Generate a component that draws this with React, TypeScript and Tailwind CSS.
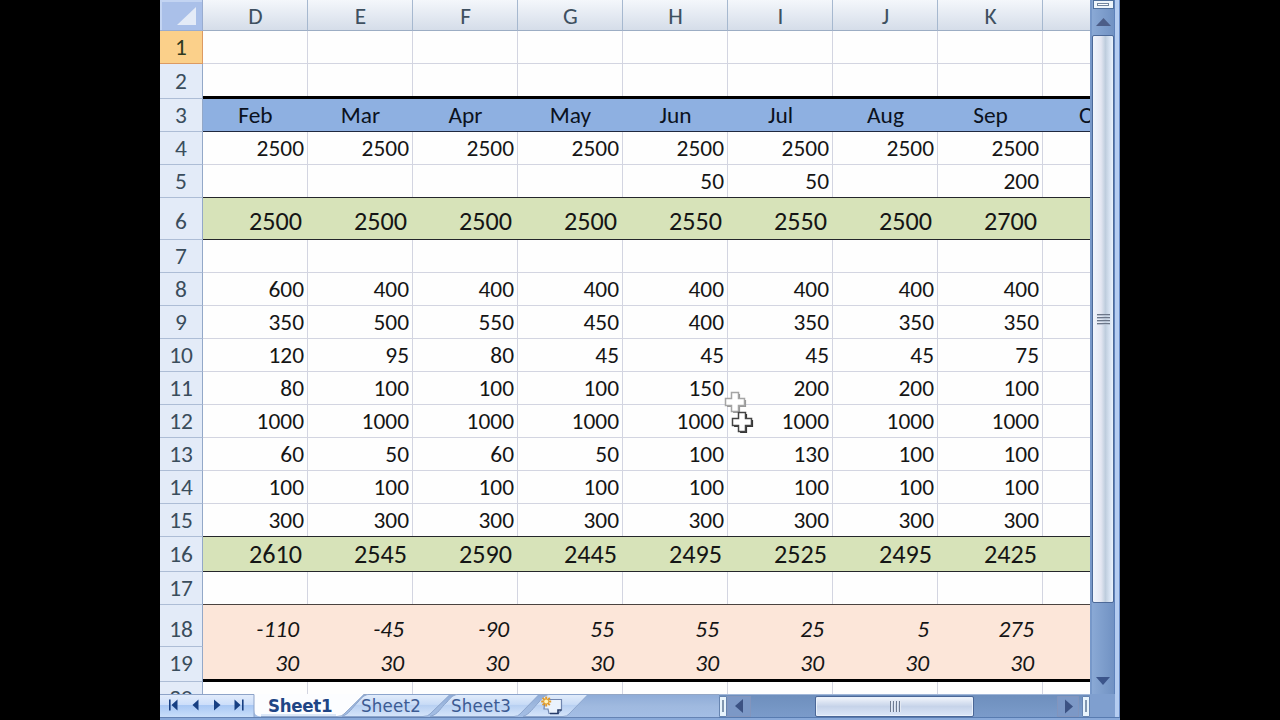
type Kind = "plain" | "months" | "total" | "balance";
type Row = {
  n: number;
  height: string;
  kind?: Kind;
  line?: string;
  pad?: string;
  headPad?: string;
  values?: string[];
};

const thin = "border-b border-[#d3d5e1]";
const dark = "border-b border-[#24262b]";
const thick = "border-b-[3px] border-black";

const rows: Row[] = [
  { n: 1, height: "h-[33px]", line: thin },
  { n: 2, height: "h-[35px]", line: thick },
  {
    n: 3, height: "h-[33px]", kind: "months", line: "border-b border-[#20293f]",
    values: ["Feb", "Mar", "Apr", "May", "Jun", "Jul", "Aug", "Sep", "Oct"],
  },
  { n: 4, height: "h-[33px]", line: thin, values: ["2500", "2500", "2500", "2500", "2500", "2500", "2500", "2500"] },
  { n: 5, height: "h-[33px]", line: dark, values: ["", "", "", "", "50", "50", "", "200"] },
  {
    n: 6, height: "h-[42px]", kind: "total", line: dark, pad: "pt-[6px]",
    values: ["2500", "2500", "2500", "2500", "2550", "2550", "2500", "2700"],
  },
  { n: 7, height: "h-[33px]", line: thin },
  { n: 8, height: "h-[33px]", line: thin, values: ["600", "400", "400", "400", "400", "400", "400", "400"] },
  { n: 9, height: "h-[33px]", line: thin, values: ["350", "500", "550", "450", "400", "350", "350", "350"] },
  { n: 10, height: "h-[33px]", line: thin, values: ["120", "95", "80", "45", "45", "45", "45", "75"] },
  { n: 11, height: "h-[33px]", line: thin, values: ["80", "100", "100", "100", "150", "200", "200", "100"] },
  { n: 12, height: "h-[33px]", line: thin, values: ["1000", "1000", "1000", "1000", "1000", "1000", "1000", "1000"] },
  { n: 13, height: "h-[33px]", line: thin, values: ["60", "50", "60", "50", "100", "130", "100", "100"] },
  { n: 14, height: "h-[33px]", line: thin, values: ["100", "100", "100", "100", "100", "100", "100", "100"] },
  { n: 15, height: "h-[33px]", line: dark, values: ["300", "300", "300", "300", "300", "300", "300", "300"] },
  {
    n: 16, height: "h-[35px]", kind: "total", line: dark, pad: "pt-[1px]",
    values: ["2610", "2545", "2590", "2445", "2495", "2525", "2495", "2425"],
  },
  { n: 17, height: "h-[33px]", line: "border-b border-[#4a4340]" },
  {
    n: 18, height: "h-[42px]", kind: "balance", line: "border-b border-[#fce6d9]", pad: "pt-[9px]",
    values: ["-110", "-45", "-90", "55", "55", "25", "5", "275"],
  },
  {
    n: 19, height: "h-[35px]", kind: "balance", line: thick, headPad: "pt-0",
    values: ["30", "30", "30", "30", "30", "30", "30", "30"],
  },
  { n: 20, height: "h-[33px]", line: thin },
];

const columns = ["D", "E", "F", "G", "H", "I", "J", "K", ""];
const slots = [0, 1, 2, 3, 4, 5, 6, 7, 8];

const cellStyle: Record<Kind, string> = {
  plain: "justify-end pr-[3px] border-r border-r-[#d3d5e1] bg-[#fefefe]",
  months: "justify-center bg-[#8eb0e1] text-[#0b1220]",
  total: "justify-end pr-[6px] bg-[#d7e3b9] text-[26.2px]",
  balance: "justify-end pr-[9px] bg-[#fce6d9] italic",
};

function GridRow({ row }: { row: Row }) {
  const active = row.n === 1;
  const pad = row.pad ?? "pt-[2px]";
  return (
    <div className={`flex shrink-0 ${row.height}`}>
      <div
        className={`flex w-[43px] shrink-0 items-center justify-center border-r border-b leading-none ${row.headPad ?? pad} ${
          active
            ? "border-[#dc9a62] bg-[#fbd08a] text-[#2f3a20]"
            : "border-r-[#93a8c8] border-b-[#adbdd6] bg-[#e3ebf8] text-[#3a4d5c]"
        }`}
      >
        {row.n}
      </div>
      <div className={`flex shrink-0 ${row.line}`}>
        {slots.map((i) => (
          <div
            key={i}
            className={`flex w-[105px] shrink-0 items-center leading-none ${pad} ${cellStyle[row.kind ?? "plain"]}`}
          >
            {row.values?.[i] ?? ""}
          </div>
        ))}
      </div>
    </div>
  );
}

function CrossCursor({ className, stroke, shadow }: { className: string; stroke: string; shadow: string }) {
  const d = "M8.5 1.5h7v6h6v7h-6v6h-7v-6h-6v-7h6z";
  return (
    <svg className={className} width="26" height="26" viewBox="0 0 26 26">
      <path d={d} transform="translate(1.6 1.6)" fill={shadow} />
      <path d={d} fill="#ffffff" stroke={stroke} strokeWidth="1.5" />
    </svg>
  );
}

function SheetTabs() {
  return (
    <div className="relative h-[24px] w-[559px] shrink-0 overflow-hidden">
      <svg width="559" height="24" viewBox="0 0 559 24" className="block">
        <defs>
          <linearGradient id="bar" x1="0" y1="0" x2="0" y2="1">
            <stop offset="0" stopColor="#8eabd7" />
            <stop offset="0.5" stopColor="#9fb9df" />
            <stop offset="1" stopColor="#a4bee5" />
          </linearGradient>
          <linearGradient id="tab" x1="0" y1="0" x2="0" y2="1">
            <stop offset="0" stopColor="#e3edfb" />
            <stop offset="0.45" stopColor="#c8dbf6" />
            <stop offset="0.5" stopColor="#b8d0f2" />
            <stop offset="1" stopColor="#d6e5fa" />
          </linearGradient>
          <linearGradient id="nav" x1="0" y1="0" x2="0" y2="1">
            <stop offset="0" stopColor="#e4edfb" />
            <stop offset="0.48" stopColor="#ccdefa" />
            <stop offset="0.5" stopColor="#a9c8f4" />
            <stop offset="1" stopColor="#c9defa" />
          </linearGradient>
        </defs>
        <rect width="559" height="24" fill="url(#bar)" />
        <path d="M0 .5H559" stroke="#93a6c5" />
        <path d="M363 22.500C370 20 373 14 379 8C383 3 386 .5 390 .5H428L409 20Q407 22.500 403 22.500Z" fill="url(#tab)" stroke="#8ca5cd" />
        <path d="M270 22.500C279 20 280 14 287 8C291 3 294 .5 298 .5H379L360 20Q358 22.500 354 22.500Z" fill="url(#tab)" stroke="#8ca5cd" />
        <path d="M182 22.500C189 20 192 14 198 8C202 3 205 .5 209 .5H290L270 20Q268 22.500 263 22.500Z" fill="url(#tab)" stroke="#8ca5cd" />
        <path d="M94 0H204L184 20Q182 22.500 177 22.500H101Q94 22 94 16Z" fill="#fcfdff" />
        <path d="M204 .5L184 20Q182 22.500 177 22.500H101" fill="none" stroke="#91a8cc" />
        <path d="M101 21H176" stroke="#dbe7f8" strokeWidth="2" />
        <rect width="94" height="23" fill="url(#nav)" />
        <path d="M0 .5H94V23" fill="none" stroke="#8da3c8" />
        <g fill="#173f82">
          <path d="M9 5.500h1.600v11H9zM17.500 5.500v11L11.500 11z" />
          <path d="M38.500 5.500v11L32.500 11z" />
          <path d="M54 5.500v11L60.500 11z" />
          <path d="M74.500 5.500v11L80.500 11zM82 5.500h1.600v11H82z" />
        </g>
        <path d="M385 5.500H401.500V16L398 19.500H389L388 15H384Z" fill="#eaf2fd" stroke="#7187b0" strokeWidth="1.200" />
        <path d="M390 19.500H398V16H401.500" fill="none" stroke="#263b68" strokeWidth="1.600" />
        <path d="M386.200 2.500V12.500M381.200 7.500H391.200M382.600 3.900L389.800 11.100M389.800 3.900L382.600 11.100" stroke="#e29b2c" strokeWidth="2" />
        <circle cx="386.200" cy="7.500" r="2" fill="#fff5bd" />
        <path d="M0 23.500H559" stroke="#6583b4" />
      </svg>
      <div className="absolute inset-0 flex items-center pt-px font-['DejaVu_Sans_Condensed','DejaVu_Sans',sans-serif] text-[18.5px] leading-none tracking-[0.2px] text-[#3c5b93] [font-stretch:condensed]">
        <span className="ml-[108px] w-[93px] font-bold tracking-[-0.3px] text-[#1f4585]">Sheet1</span>
        <span className="w-[90px]">Sheet2</span>
        <span>Sheet3</span>
      </div>
    </div>
  );
}

function SplitHandle() {
  return (
    <div className="flex h-[21px] w-[8px] shrink-0 items-center justify-center rounded-[1px] border border-[#6684b0] bg-[#e8f4fc]">
      <div className="h-[12px] w-[2px] bg-[#8197b0]" />
    </div>
  );
}

function HorizontalScroll() {
  return (
    <div className="flex h-[24px] w-[371px] shrink-0 items-center border-t border-b border-t-[#a0b6d8] border-b-[#587bb0] bg-gradient-to-b from-[#6e8fbd] to-[#7b9bca]">
      <SplitHandle />
      <div className="flex h-[21px] w-[24px] shrink-0 items-center border border-[#8295bd] bg-[#7c98c6] pl-[7px]">
        <svg width="9" height="14" viewBox="0 0 9 14"><path d="M8 0v14L0 7z" fill="#3c5283" /></svg>
      </div>
      <div className="flex h-full w-[306px] shrink-0 items-center pl-[64px]">
        <div className="flex h-[21px] w-[159px] shrink-0 items-center justify-center gap-[2px] rounded-[2px] border border-[#4b6797] bg-gradient-to-b from-[#f3f6fc] via-[#c6d3e9] via-50% to-[#dce7f8] shadow-[inset_0_0_0_1px_#e9f1fb]">
          {[0, 1, 2, 3].map((i) => (
            <div key={i} className="h-[11px] w-px bg-[#6e7b91] shadow-[1px_0_0_#e3e9f3]" />
          ))}
        </div>
      </div>
      <svg className="shrink-0" width="25" height="21" viewBox="0 0 25 21">
        <path d="M.5 .5H21.500V20.500H.5Z" fill="#7c98c6" stroke="#8295bd" />
        <path d="M8 3.500v14L16 10.500z" fill="#3c5283" />
      </svg>
      <SplitHandle />
    </div>
  );
}

function VerticalScroll() {
  return (
    <div className="flex h-[694px] w-[30px] shrink-0">
      <div className="w-[2px] bg-[#7798c9]" />
      <div className="flex w-[22px] flex-col items-center bg-gradient-to-r from-[#8aa9d5] to-[#7192c3]">
        <div className="flex h-[9px] w-[21px] shrink-0 items-center justify-center border border-[#4e6f9c] bg-[#eef5fb]">
          <div className="h-[3px] w-[12px] border border-[#72869f] bg-white" />
        </div>
        <div className="flex h-[26px] shrink-0 items-center pb-px">
          <svg width="15" height="8" viewBox="0 0 15 8"><path d="M0 8h15L7.500 0z" fill="#4c5d87" /></svg>
        </div>
        <div className="flex h-[568px] w-[22px] shrink-0 flex-col items-center justify-center gap-[2px] rounded-[2px] border border-[#4c6998] bg-[linear-gradient(90deg,#f0f5fc_0%,#e4e7f2_40%,#becddd_62%,#d6e2f1_82%,#eaf3fc_100%)]">
          {[0, 1, 2, 3].map((i) => (
            <div key={i} className="h-px w-[13px] bg-[#6c7789] shadow-[0_1px_0_#b7c2d2]" />
          ))}
        </div>
        <div className="flex flex-1 items-end pb-[9px]">
          <svg width="14" height="8" viewBox="0 0 14 8"><path d="M0 0h14L7 8z" fill="#3c558b" /></svg>
        </div>
      </div>
      <div className="w-[1px] bg-[#5e82ba]" />
      <div className="w-[4px] bg-[#b5cdf1]" />
      <div className="w-[1px] bg-[#6689c4]" />
    </div>
  );
}

export default function App() {
  return (
    <div className="flex h-[720px] w-[1280px] justify-center overflow-hidden bg-black font-['Carlito','Lato',sans-serif]">
      <div className="relative flex h-[720px] w-[960px] flex-col bg-[#89a9d9]">
        <div className="flex h-[694px] shrink-0">
          <div className="flex w-[930px] shrink-0 flex-col overflow-hidden bg-[#fefefe] text-[23.4px] text-[#151515]">
            <div className="flex h-[31px] shrink-0">
              <div className="flex w-[43px] shrink-0 items-end justify-end border-r border-b border-[#98acd0] bg-[#aac0e9] pr-[6px] pb-[5px] shadow-[inset_2px_2px_0_#c3d4f2]">
                <svg width="19" height="18" viewBox="0 0 19 18"><path d="M19 0v18H0z" fill="#e4ebf7" /></svg>
              </div>
              {columns.map((c, i) => (
                <div
                  key={i}
                  className="flex w-[105px] shrink-0 items-center justify-center border-r border-b border-r-[#a6b8cf] border-b-[#9cadc4] bg-gradient-to-b from-[#f4f7fb] to-[#d5dde9] pt-[3px] pl-[1px] leading-none text-[#3e5060]"
                >
                  {c}
                </div>
              ))}
            </div>
            {rows.map((r) => (
              <GridRow key={r.n} row={r} />
            ))}
          </div>
          <VerticalScroll />
        </div>
        <div className="flex h-[24px] shrink-0">
          <SheetTabs />
          <HorizontalScroll />
          <div className="flex w-[30px] shrink-0 border-b border-[#587bb0] bg-[#7f9fcf]">
            <div className="ml-[25px] w-[4px] bg-[#b5cdf1]" />
            <div className="w-[1px] bg-[#6689c4]" />
          </div>
        </div>
        <CrossCursor className="absolute top-[391px] left-[563px]" stroke="#a5a5a5" shadow="#969696" />
        <CrossCursor className="absolute top-[411px] left-[570px]" stroke="#444444" shadow="#333333" />
      </div>
    </div>
  );
}
